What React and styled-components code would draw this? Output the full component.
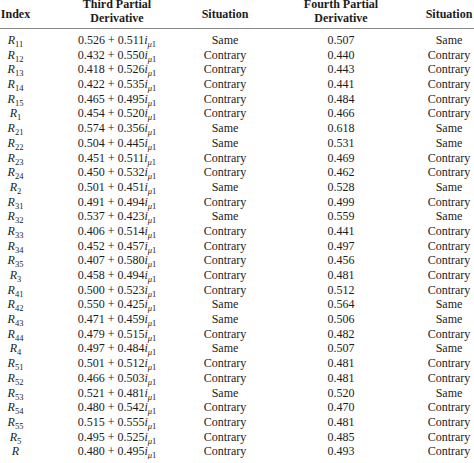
import React from "react";
import styled, { createGlobalStyle } from "styled-components";

const rows = [
  ["11", "0.526", "0.511", "Same", "0.507", "Same"],
  ["12", "0.432", "0.550", "Contrary", "0.440", "Contrary"],
  ["13", "0.418", "0.526", "Contrary", "0.443", "Contrary"],
  ["14", "0.422", "0.535", "Contrary", "0.441", "Contrary"],
  ["15", "0.465", "0.495", "Contrary", "0.484", "Contrary"],
  ["1", "0.454", "0.520", "Contrary", "0.466", "Contrary"],
  ["21", "0.574", "0.356", "Same", "0.618", "Same"],
  ["22", "0.504", "0.445", "Same", "0.531", "Same"],
  ["23", "0.451", "0.511", "Contrary", "0.469", "Contrary"],
  ["24", "0.450", "0.532", "Contrary", "0.462", "Contrary"],
  ["2", "0.501", "0.451", "Same", "0.528", "Same"],
  ["31", "0.491", "0.494", "Contrary", "0.499", "Contrary"],
  ["32", "0.537", "0.423", "Same", "0.559", "Same"],
  ["33", "0.406", "0.514", "Contrary", "0.441", "Contrary"],
  ["34", "0.452", "0.457", "Contrary", "0.497", "Contrary"],
  ["35", "0.407", "0.580", "Contrary", "0.456", "Contrary"],
  ["3", "0.458", "0.494", "Contrary", "0.481", "Contrary"],
  ["41", "0.500", "0.523", "Contrary", "0.512", "Contrary"],
  ["42", "0.550", "0.425", "Same", "0.564", "Same"],
  ["43", "0.471", "0.459", "Same", "0.506", "Same"],
  ["44", "0.479", "0.515", "Contrary", "0.482", "Contrary"],
  ["4", "0.497", "0.484", "Same", "0.507", "Same"],
  ["51", "0.501", "0.512", "Contrary", "0.481", "Contrary"],
  ["52", "0.466", "0.503", "Contrary", "0.481", "Contrary"],
  ["53", "0.521", "0.481", "Same", "0.520", "Same"],
  ["54", "0.480", "0.542", "Contrary", "0.470", "Contrary"],
  ["55", "0.515", "0.555", "Contrary", "0.481", "Contrary"],
  ["5", "0.495", "0.525", "Contrary", "0.485", "Contrary"],
  ["", "0.480", "0.495", "Contrary", "0.493", "Contrary"],
];

const GlobalStyle = createGlobalStyle`
  html, body {
    margin: 0;
    padding: 0;
    background: #ffffff;
    overflow: hidden;
  }
  body {
    font-family: "Liberation Serif", "DejaVu Serif", serif;
    color: #1c1c1c;
  }
`;

const Table = styled.div`
  width: 474px;
  margin-top: -3px;
  font-size: 12px;
`;

const Grid = styled.div`
  display: grid;
  grid-template-columns: 31px 172px 44px 188px 28px;
`;

const HeaderRow = styled(Grid)`
  height: 31px;
  border-bottom: 1px solid #8a8a8a;
  font-weight: bold;
  line-height: 14px;
  margin-bottom: 4px;
`;

const Row = styled(Grid)`
  height: 14.7px;
  line-height: 14.7px;
`;

const Cell = styled.div`
  display: flex;
  justify-content: center;
  align-items: ${(p) => (p.$top ? "flex-start" : "center")};
  white-space: nowrap;
  text-align: center;
`;

const HeadCell = styled(Cell)`
  padding-top: ${(p) => (p.$top ? "0" : "3px")};
`;

const Italic = styled.i`
  font-style: italic;
`;

const Sub = styled.sub`
  font-size: 8.5px;
  vertical-align: -3px;
  line-height: 0;
  font-style: normal;
`;

const Plus = styled.span`
  padding: 0 3px;
`;

function Complex({ a, b }) {
  return (
    <span>
      {a}
      <Plus>+</Plus>
      {b}
      <Italic>i</Italic>
      <Sub>
        <Italic>μ</Italic>1
      </Sub>
    </span>
  );
}

export default function App() {
  return (
    <>
      <GlobalStyle />
      <Table>
        <HeaderRow>
          <HeadCell>Index</HeadCell>
          <HeadCell $top>
            Third Partial
            <br />
            Derivative
          </HeadCell>
          <HeadCell>Situation</HeadCell>
          <HeadCell $top>
            Fourth Partial
            <br />
            Derivative
          </HeadCell>
          <HeadCell>Situation</HeadCell>
        </HeaderRow>
        {rows.map((r, i) => (
          <Row key={i}>
            <Cell>
              <span>
                <Italic>R</Italic>
                {r[0] && <Sub>{r[0]}</Sub>}
              </span>
            </Cell>
            <Cell>
              <Complex a={r[1]} b={r[2]} />
            </Cell>
            <Cell>{r[3]}</Cell>
            <Cell>{r[4]}</Cell>
            <Cell>{r[5]}</Cell>
          </Row>
        ))}
      </Table>
    </>
  );
}
